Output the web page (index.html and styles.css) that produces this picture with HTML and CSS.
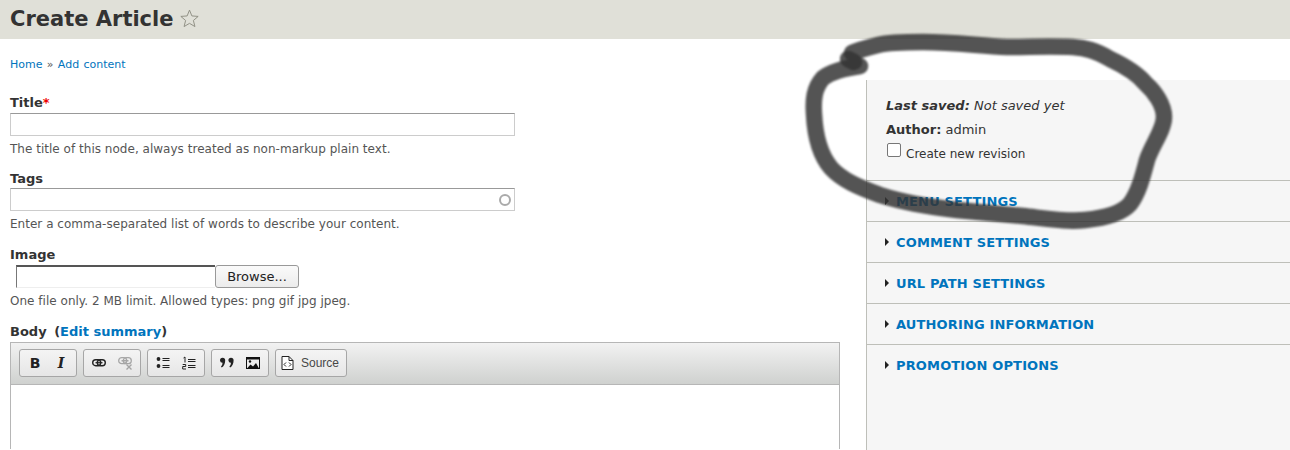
FILE: index.html
```html
<!DOCTYPE html>
<html lang="en">
<head>
<meta charset="utf-8">
<title>Create Article</title>
<link rel="stylesheet" href="styles.css">
</head>
<body>
<header class="page-head">
  <h1 class="page-title">Create Article</h1>
  <svg class="star" viewBox="0 0 20 20" width="19" height="19"><path d="M10 1.200l2.500 6.100 6.600.5-5 4.300 1.600 6.400L10 15.100l-5.700 3.400 1.600-6.400-5-4.300 6.600-.5z" fill="none" stroke="#8d8d82" stroke-width="1"/></svg>
</header>
<div class="layout">
  <main class="content">
    <nav class="crumbs"><a href="#">Home</a> » <a href="#">Add content</a></nav>
    <div class="field field-title">
      <label class="label">Title<span class="req">*</span></label>
      <div class="input"></div>
      <p class="hint hint-title">The title of this node, always treated as non-markup plain text.</p>
    </div>
    <div class="field field-tags">
      <label class="label">Tags</label>
      <div class="input input-auto"><span class="throbber"></span></div>
      <p class="hint hint-tags">Enter a comma-separated list of words to describe your content.</p>
    </div>
    <div class="field field-image">
      <label class="label">Image</label>
      <div class="file-row"><div class="file-box"></div><button class="browse" type="button">Browse...</button></div>
      <p class="hint hint-image">One file only. 2 MB limit. Allowed types: png gif jpg jpeg.</p>
    </div>
    <div class="field field-body">
      <label class="label">Body <span class="summary">(<a href="#">Edit summary</a>)</span></label>
      <div class="editor">
        <div class="toolbar">
          <div class="group">
            <span class="tool tool-b">B</span>
            <span class="tool tool-i">I</span>
          </div>
          <div class="group">
            <span class="tool"><svg viewBox="0 0 14 14" width="14" height="14"><rect x=".7" y="3.700" width="8" height="6" rx="3" fill="none" stroke="#222" stroke-width="1.400"/><rect x="5.300" y="3.700" width="8" height="6" rx="3" fill="none" stroke="#222" stroke-width="1.400"/><path d="M3.500 6.700h7" stroke="#222" stroke-width="1.200"/></svg></span>
            <span class="tool tool-off"><svg viewBox="0 0 14 14" width="14" height="14"><rect x=".7" y="1.700" width="8" height="6" rx="3" fill="none" stroke="#222" stroke-width="1.300"/><rect x="5.300" y="1.700" width="8" height="6" rx="3" fill="none" stroke="#222" stroke-width="1.300"/><path d="M3.500 4.700h7M8.500 8.500l5 5M13.500 8.500l-5 5" stroke="#222" stroke-width="1.400"/></svg></span>
          </div>
          <div class="group">
            <span class="tool"><svg viewBox="0 0 14 14" width="14" height="14"><circle cx="2.500" cy="3" r="1.900" fill="#222"/><circle cx="2.500" cy="10" r="1.900" fill="#222"/><path d="M6.500 2.500h7M6.500 4.500h7M6.500 9.500h7M6.500 11.500h7" stroke="#222"/></svg></span>
            <span class="tool"><svg viewBox="0 0 14 14" width="14" height="14"><path d="M1.500 2l1.500-1v5.500M6 3.500h7.500M6 5.500h7.500M6 9.500h7.500M6 11.500h7.500M.7 8.500h3v2h-3v2.500h3.300" fill="none" stroke="#222"/></svg></span>
          </div>
          <div class="group">
            <span class="tool"><svg viewBox="0 0 14 14" width="14" height="14"><path d="M0 4.400a2.600 2.600 0 1 1 5.200 0c0 3.200-1.400 5.900-3.500 7.100l-.7-1c.9-.7 1.500-1.800 1.500-3.700A2.600 2.600 0 0 1 0 4.400zM8.400 4.400a2.600 2.600 0 1 1 5.200 0c0 3.200-1.400 5.900-3.500 7.100l-.7-1c.9-.7 1.500-1.800 1.500-3.700A2.600 2.600 0 0 1 8.400 4.400z" fill="#222"/></svg></span>
            <span class="tool"><svg viewBox="0 0 14 14" width="14" height="14"><rect x=".5" y="1.500" width="13" height="11" fill="none" stroke="#111"/><path d="M1 12.500l3.500-4 2.500 2 3-3.500 3 5.500z" fill="#111"/><path d="M1 2h12v1.500H1z" fill="#111"/><circle cx="4" cy="5.500" r="1.200" fill="#111"/></svg></span>
          </div>
          <div class="group">
            <span class="tool tool-source"><svg viewBox="0 0 13 14" width="13" height="14"><path d="M1 .5h7l4 4v9H1z" fill="#fff" stroke="#222"/><path d="M8 .5v4h4M5 6.500L3 8.500l2 2M8 6.500l2 2-2 2" fill="none" stroke="#222"/></svg><span class="source-text">Source</span></span>
          </div>
        </div>
        <div class="editor-area"></div>
      </div>
    </div>
  </main>
  <aside class="side">
    <div class="meta">
      <p class="meta-line meta-saved"><b>Last saved:</b> Not saved yet</p>
      <p class="meta-line"><b>Author:</b> admin</p>
      <label class="revision"><span class="check"></span>Create new revision</label>
    </div>
    <div class="section"><span class="arrow"></span><a href="#">MENU SETTINGS</a></div>
    <div class="section"><span class="arrow"></span><a href="#">COMMENT SETTINGS</a></div>
    <div class="section"><span class="arrow"></span><a href="#">URL PATH SETTINGS</a></div>
    <div class="section"><span class="arrow"></span><a href="#">AUTHORING INFORMATION</a></div>
    <div class="section"><span class="arrow"></span><a href="#">PROMOTION OPTIONS</a></div>
  </aside>
</div>
<svg class="scribble" viewBox="0 0 1290 450" width="1290" height="450" fill="none" stroke="#333" stroke-opacity=".84" stroke-width="16.500" stroke-linecap="round" stroke-linejoin="round"><path d="M860 66C846 68 832 71 823 78C814 88 813 100 814 114C815 135 820 155 831 168C842 180 858 187 880 195C905 203 930 207 957 210C980 212 1003 214 1023 216C1050 219 1068 222 1085 220C1105 218 1122 213 1130 204C1139 192 1143 175 1147 160C1152 145 1164 130 1164 117C1164 105 1155 92 1146 84C1138 74 1125 66 1110 59C1095 50 1085 48 1073 47C1050 46 1030 47 1007 47C980 46 955 42 923 42C905 42 890 42 878 45C866 48 858 50 852 53"/><path d="M848 59L854 62"/></svg>
</body>
</html>
```
FILE: styles.css
```css
* { box-sizing: border-box; }
html, body { margin: 0; padding: 0; }
body {
  width: 1290px;
  height: 450px;
  overflow: hidden;
  position: relative;
  background: #fff;
  color: #333;
  font: 13px/1.2 "DejaVu Sans", sans-serif;
}
a { color: #0074bd; text-decoration: none; }

.page-head {
  height: 39px;
  background: #e0e0d8;
  padding: 0 10px;
  display: flex;
  align-items: center;
  gap: 6px;
}
.page-title { margin: 0; font-size: 21px; line-height: 37px; font-weight: 700; color: #333; }
.star { display: block; margin-bottom: 2px; }

.layout { display: flex; height: 411px; }
.content { width: 866px; padding: 0 26px 0 10px; flex: none; }
.crumbs { font-size: 11px; line-height: 14px; margin-top: 19px; color: #555; word-spacing: .8px; }

.field { margin: 0; }
.field-title { margin-top: 23px; }
.field-tags { margin-top: 14px; }
.field-image { margin-top: 15px; }
.field-body { margin-top: 15px; }
.label { display: block; font-weight: 700; font-size: 13px; line-height: 16px; color: #333; }
.req { color: #e00; }
.input {
  width: 505px;
  height: 23px;
  margin-top: 2px;
  border: 1px solid #ccc;
  border-top-color: #999;
  background: #fff;
  position: relative;
}
.field-tags .input { margin-top: 1px; }
.input-auto { display: flex; align-items: center; justify-content: flex-end; padding-right: 3px; }
.throbber { width: 12px; height: 12px; border-radius: 50%; border: 2px solid #aaa; }
.hint { margin: 5px 0 0; font-size: 12px; line-height: 15px; color: #555; letter-spacing: .02px; }
.hint-title { margin-top: 6px; }
.hint-tags { margin-top: 6px; }
.hint-image { margin-top: 6px; }

.file-row { display: flex; margin: 2px 0 0 6px; height: 23px; align-items: stretch; }
.file-box {
  width: 199px;
  background: #fff;
  border-top: 2px solid #555;
  border-left: 1px solid #777;
  border-bottom: 1px solid #eee;
}
.browse {
  width: 84px;
  height: 23px;
  padding: 0;
  font: 13px "DejaVu Sans", sans-serif;
  color: #222;
  background: linear-gradient(#fafafa, #ececec);
  border: 1px solid #999;
  border-radius: 3px;
}

.summary { margin-left: 3px; }
.summary a { color: #0074bd; }
.editor { margin-top: 2px; width: 830px; height: 107px; border: 1px solid #b6b6b6; border-bottom: 0; background: #fff; }
.toolbar {
  height: 42px;
  padding: 6px 0 0 8px;
  display: flex;
  gap: 6px;
  background: linear-gradient(#f2f2f2, #cfd1cf);
  border-bottom: 1px solid #b6b6b6;
}
.group {
  height: 28px;
  display: flex;
  padding: 0 2px;
  border: 1px solid #a6a6a6;
  border-radius: 3px;
  background: linear-gradient(#f4f4f4, #e6e6e6);
}
.tool {
  width: 26px;
  display: flex;
  align-items: center;
  justify-content: center;
  color: #222;
  font: 700 16px "Liberation Sans", sans-serif;
}
.tool-b { font-family: "DejaVu Sans", sans-serif; font-size: 14px; }
.tool-i { font-family: "DejaVu Serif", serif; font-style: italic; font-size: 14px; }
.tool-off { opacity: .35; }
.tool-source { width: 66px; gap: 7px; padding-left: 3px; justify-content: flex-start; }
.source-text { font: 12px "Liberation Sans", sans-serif; color: #474747; }
.editor-area { height: 64px; }

.side {
  margin-top: 41px;
  width: 424px;
  flex: none;
  height: 370px;
  background: #f6f6f6;
  border-left: 1px solid #bebfb9;
}
.meta { height: 100px; padding: 18px 19px 0; font-size: 13px; }
.meta-line { margin: 0 0 8px; line-height: 16px; }
.meta-saved { font-style: italic; }
.revision { display: flex; font-size: 12px; line-height: 16px; }
.check {
  width: 14px;
  height: 14px;
  margin: -3px 5px 0 1px;
  border: 1px solid #777;
  border-radius: 2px;
  background: #fff;
}
.section {
  height: 41px;
  padding: 2px 0 0 18px;
  display: flex;
  align-items: center;
  gap: 7px;
  border-top: 1px solid #bebfb9;
  font-size: 13px;
  font-weight: 700;
  letter-spacing: .15px;
}
.arrow { width: 0; height: 0; margin-top: -2px; border-left: 4px solid #222; border-top: 4px solid transparent; border-bottom: 4px solid transparent; }

.scribble { position: absolute; left: 0; top: 0; pointer-events: none; filter: blur(1.200px); }
```
